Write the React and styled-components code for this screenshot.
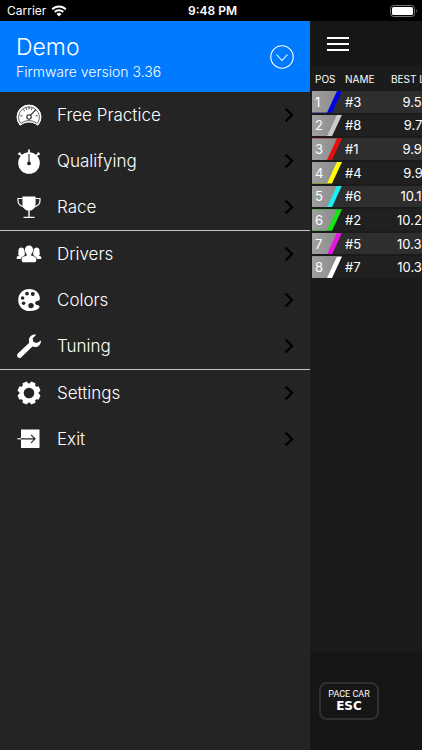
import React from "react";
import styled, { createGlobalStyle } from "styled-components";

const menuGroups = [
  [
    { id: "practice", label: "Free Practice" },
    { id: "qualifying", label: "Qualifying" },
    { id: "race", label: "Race" },
  ],
  [
    { id: "drivers", label: "Drivers" },
    { id: "colors", label: "Colors" },
    { id: "tuning", label: "Tuning" },
  ],
  [
    { id: "settings", label: "Settings" },
    { id: "exit", label: "Exit" },
  ],
];

const drivers = [
  { name: "#3", best: "9.545", color: "#0000e6" },
  { name: "#8", best: "9.743", color: "#cccccc" },
  { name: "#1", best: "9.924", color: "#e60f0f" },
  { name: "#4", best: "9.957", color: "#ffff00" },
  { name: "#6", best: "10.164", color: "#19f0f0" },
  { name: "#2", best: "10.286", color: "#14e614" },
  { name: "#5", best: "10.348", color: "#e614e6" },
  { name: "#7", best: "10.363", color: "#ffffff" },
];

const icons = {
  practice: (
    <>
      <path
        d="M4.2 23.2 A12 12 0 1 1 21.8 23.2 L19.4 21.6 Q13 18.4 6.6 21.6 Z"
        fill="#fff"
        stroke="#fff"
        strokeWidth="1"
        strokeLinejoin="round"
      />
      <path
        d="M4.6 21.4 A10.4 10.4 0 1 1 21.4 21.4 M5 21.2 Q13 15.8 21 21.2"
        fill="none"
        stroke="#242424"
        strokeWidth="0.7"
      />
      <path
        d="M13 5v2.4M7.4 7.6l1.4 1.6M4.4 13.8h2M19.6 13.8h2M9.8 5.8l.8 2M16.2 5.8l-.8 2"
        stroke="#242424"
        strokeWidth="0.9"
      />
      <path d="M13.8 13.8 L20 7.6" stroke="#242424" strokeWidth="1.2" />
      <circle cx="13" cy="15" r="2.2" fill="#fff" stroke="#242424" strokeWidth="1.1" />
    </>
  ),
  qualifying: (
    <>
      <circle cx="13" cy="15" r="10.8" fill="#fff" />
      <path d="M13 1.6v4" stroke="#fff" strokeWidth="1.8" />
      <path
        d="M3.4 5.4l2.2 2.2M22.6 5.4l-2.2 2.2M2.4 6.6l2-2M23.6 6.6l-2-2"
        stroke="#fff"
        strokeWidth="1.8"
      />
      <path d="M13 6v9" stroke="#242424" strokeWidth="1.1" />
      <circle cx="13" cy="15.4" r="1.9" fill="#242424" />
    </>
  ),
  race: (
    <>
      <path d="M6.4 2.4h13.2v7.4q0 5-4.4 6.6h-4.4q-4.4-1.6-4.4-6.6z" fill="#fff" />
      <path
        d="M6.4 4.5H2v2q0 5 6 6.5M19.6 4.5H24v2q0 5-6 6.5"
        fill="none"
        stroke="#fff"
        strokeWidth="1.2"
      />
      <path d="M13 16v7M7.5 23.4h11" stroke="#fff" strokeWidth="1.4" />
    </>
  ),
  drivers: (
    <g fill="#fff">
      <path d="M13 4.4c2.6 0 4 1.8 4 4.4 0 2-.8 3.6-1.8 4.5v1.3c2.9.9 5 1.500 5.200 3.400.1 1.700-.5 3.200-1.200 3.200H6.800c-.7 0-1.300-1.500-1.200-3.200.2-1.900 2.300-2.500 5.200-3.400v-1.300c-1-.9-1.800-2.500-1.800-4.500 0-2.600 1.400-4.400 4-4.400z" />
      <path d="M5.300 6.400c1.600 0 2.800.9 3.100 2.600.3 1.900.2 3.200.8 4.500l-1.600.4 1.100.8c-2 .7-3.500 1.500-3.900 3.200H.9c-.5-1-.3-2.200.6-2.700l2-1-1.600-.6c.7-1.100.4-2.500.6-4.400.2-1.800 1.200-2.800 2.800-2.800z" />
      <path d="M20.700 6.400c-1.600 0-2.800.9-3.100 2.600-.3 1.900-.2 3.200-.8 4.500l1.600.4-1.100.8c2 .7 3.500 1.500 3.900 3.200h3.900c.5-1 .3-2.200-.6-2.700l-2-1 1.600-.6c-.7-1.100-.4-2.500-.6-4.400-.2-1.800-1.200-2.800-2.800-2.800z" />
    </g>
  ),
  colors: (
    <>
      <path
        d="M13.5 2C7 2 2.200 6.700 2.200 12.900S7 24 13.800 24c4.200 0 7.600-.9 9.300-3 .8-1.100.3-2.500-1-2.700-1.900-.3-3-.9-3-2.200 0-1.400 1.400-2 3-2.300 1.600-.4 1.900-1.600 1.700-3.100C23.200 5.600 19.400 2 13.500 2z"
        fill="#fff"
      />
      <g fill="#242424">
        <circle cx="11" cy="6.6" r="1.9" />
        <circle cx="16.8" cy="7" r="2" />
        <circle cx="6.6" cy="11" r="1.8" />
        <circle cx="7.6" cy="16.2" r="1.8" />
        <circle cx="15" cy="18.6" r="2.7" />
      </g>
    </>
  ),
  tuning: (
    <>
      <path d="M3.6 22.4L15.5 11" stroke="#fff" strokeWidth="5" strokeLinecap="round" />
      <path
        d="M20.3 1.600c-4-.9-7.600 2-7.400 6.200.1 3.700 2.700 6.200 6.200 6.200 3.300 0 5.900-2.600 5.900-6.600l-4.200 2.500-3.400-1-.8-3.400z"
        fill="#fff"
      />
    </>
  ),
  settings: (
    <>
      <circle cx="13" cy="13" r="7.4" fill="none" stroke="#fff" strokeWidth="4.2" />
      {[22.5, 67.5, 112.5, 157.5, 202.5, 247.5, 292.5, 337.5].map((angle) => (
        <path
          key={angle}
          d="M9.4 5.6L10.8 1.5h4.4l1.4 4.1z"
          fill="#fff"
          transform={`rotate(${angle} 13 13)`}
        />
      ))}
    </>
  ),
  exit: (
    <>
      <rect x="5" y="3.5" width="18.5" height="18.5" fill="#fff" />
      <path d="M1.5 12.8H5" stroke="#fff" strokeWidth="1.2" />
      <path
        d="M5 12.8h13.5M15 8.8l4 4-4 4"
        fill="none"
        stroke="#242424"
        strokeWidth="1.2"
      />
    </>
  ),
};

const MenuItem = ({ id, label }) => {
  return (
    <li>
      <MenuButton type="button">
        <MenuIcon viewBox="0 0 26 26" aria-hidden="true">
          {icons[id]}
        </MenuIcon>
        <MenuLabel>{label}</MenuLabel>
        <Chevron viewBox="0 0 10 16" aria-hidden="true">
          <path d="M1.5 1.5L8 8l-6.5 6.5" fill="none" stroke="#000" strokeWidth="2.2" />
        </Chevron>
      </MenuButton>
    </li>
  );
};

const StatusBar = () => {
  return (
    <StatusWrapper>
      <StatusSide>
        <span>Carrier</span>
        <svg width="16" height="12" viewBox="0 0 16 12" aria-hidden="true">
          <path
            d="M1.2 4.4a9.6 9.6 0 0 1 13.6 0M3.7 7a6.1 6.1 0 0 1 8.6 0"
            fill="none"
            stroke="#fff"
            strokeWidth="2"
          />
          <path d="M8 11.6L5.5 9a3.6 3.6 0 0 1 5 0z" fill="#fff" />
        </svg>
      </StatusSide>
      <StatusTime>9:48 PM</StatusTime>
      <StatusSide $end>
        <svg width="28" height="12" viewBox="0 0 28 12" aria-hidden="true">
          <rect x="0.5" y="0.5" width="24" height="11" rx="3" fill="none" stroke="#777" />
          <rect x="2" y="2" width="21" height="8" rx="1.5" fill="#fff" />
          <path d="M26 4q1.8 2 0 4z" fill="#777" />
        </svg>
      </StatusSide>
    </StatusWrapper>
  );
};

const App = () => {
  return (
    <>
      <GlobalStyle />
      <Page>
        <StatusBar />
        <Content>
          <Drawer>
            <DrawerHeader>
              <div>
                <DrawerTitle>Demo</DrawerTitle>
                <DrawerText>Firmware version 3.36</DrawerText>
              </div>
              <IconButton type="button" aria-label="Change connection">
                <svg width="24" height="24" viewBox="0 0 24 24">
                  <g fill="none" stroke="#fff" strokeWidth="1.1">
                    <circle cx="12" cy="12" r="11.2" />
                    <path d="M6.5 9.5l5.5 6 5.5-6" />
                  </g>
                </svg>
              </IconButton>
            </DrawerHeader>
            <nav>
              {menuGroups.map((group, index) => (
                <MenuGroup key={index}>
                  {group.map((item) => (
                    <MenuItem key={item.id} {...item} />
                  ))}
                </MenuGroup>
              ))}
            </nav>
          </Drawer>
          <Main>
            <TopBar>
              <IconButton type="button" aria-label="Menu">
                <svg width="22" height="14" viewBox="0 0 22 14">
                  <path d="M0 1h22M0 7h22M0 13h22" stroke="#fff" strokeWidth="2" />
                </svg>
              </IconButton>
            </TopBar>
            <TableArea>
              <Table>
                <thead>
                  <tr>
                    <HeadCell $width="30px">POS</HeadCell>
                    <HeadCell $width="46px">NAME</HeadCell>
                    <HeadCell $width="50px">BEST LAP</HeadCell>
                  </tr>
                </thead>
                <tbody>
                  {drivers.map((driver, index) => (
                    <Row key={driver.name}>
                      <PosCell>
                        <Stripe $color={driver.color}>
                          <Position>{index + 1}</Position>
                        </Stripe>
                      </PosCell>
                      <Cell>{driver.name}</Cell>
                      <Cell $right>{driver.best}</Cell>
                    </Row>
                  ))}
                </tbody>
              </Table>
            </TableArea>
            <BottomBar>
              <PaceCarButton type="button">
                <span>PACE CAR</span>
                <EscText>ESC</EscText>
              </PaceCarButton>
            </BottomBar>
          </Main>
        </Content>
      </Page>
    </>
  );
};

export default App;

const GlobalStyle = createGlobalStyle`
  * {
    box-sizing: border-box;
  }
  body {
    margin: 0;
    background-color: #1b1b1b;
    color: #ffffff;
    font-family: Inter, "Liberation Sans", sans-serif;
  }
  button {
    padding: 0;
    border: none;
    background: none;
    color: inherit;
    font-family: inherit;
    cursor: pointer;
  }
  svg {
    display: block;
    flex-shrink: 0;
  }
`;

const Page = styled.div`
  display: flex;
  flex-direction: column;
  min-height: 100vh;
`;

const StatusWrapper = styled.header`
  display: flex;
  align-items: center;
  height: 21px;
  padding: 0 4px 0 7px;
  background-color: #000000;
  font-size: 12px;
  line-height: 20px;
`;

const StatusSide = styled.div`
  display: flex;
  flex: 1;
  align-items: center;
  justify-content: ${({ $end }) => ($end ? "flex-end" : "flex-start")};
  gap: 5px;
`;

const StatusTime = styled.div`
  font-weight: 600;
`;

const Content = styled.div`
  display: flex;
  flex: 1;
`;

const Drawer = styled.aside`
  flex: 0 0 310px;
  background-color: #242424;
`;

const DrawerHeader = styled.div`
  display: flex;
  align-items: center;
  justify-content: space-between;
  height: 71px;
  padding: 0 16px;
  background-color: #007aff;
`;

const DrawerTitle = styled.h1`
  margin: 0;
  font-weight: 300;
  font-size: 23px;
  line-height: 30px;
`;

const DrawerText = styled.p`
  margin: 0;
  font-weight: 300;
  font-size: 14px;
  line-height: 20px;
`;

const IconButton = styled.button`
  display: flex;
`;

const MenuGroup = styled.ul`
  margin: 0;
  padding: 0;
  list-style: none;
  & + & {
    border-top: 1px solid #c8c8c8;
  }
`;

const MenuButton = styled.button`
  display: flex;
  align-items: center;
  width: 100%;
  height: 46px;
  padding: 0 16px;
  text-align: left;
`;

const MenuIcon = styled.svg`
  width: 26px;
  height: 26px;
`;

const MenuLabel = styled.span`
  flex: 1;
  padding-left: 15px;
  font-weight: 300;
  font-size: 17px;
  line-height: 24px;
`;

const Chevron = styled.svg`
  width: 10px;
  height: 16px;
`;

const Main = styled.main`
  display: flex;
  flex: 1;
  flex-direction: column;
  min-width: 0;
  overflow: hidden;
`;

const TopBar = styled.div`
  display: flex;
  align-items: center;
  height: 45px;
  padding: 0 17px;
  background-color: #161616;
`;

const TableArea = styled.div`
  flex: 1;
  padding-left: 2px;
`;

const Table = styled.table`
  table-layout: fixed;
  width: 126px;
  height: 214px;
  border-spacing: 0 2px;
`;

const HeadCell = styled.th`
  width: ${({ $width }) => $width};
  height: 21px;
  padding: 0 0 0 3px;
  font-weight: 400;
  font-size: 10px;
  line-height: 20px;
  text-align: left;
  white-space: nowrap;
`;

const Row = styled.tr`
  &:nth-child(odd) {
    background-color: #2e2e2e;
  }
  &:nth-child(even) {
    background-color: #202020;
  }
`;

const Cell = styled.td`
  height: 21px;
  padding: 0 0 0 3px;
  font-size: 13px;
  line-height: 20px;
  text-align: ${({ $right }) => ($right ? "right" : "left")};
`;

const PosCell = styled.td`
  height: 21px;
  padding: 0;
`;

const Stripe = styled.div`
  height: 100%;
  background-color: ${({ $color }) => $color};
  clip-path: polygon(0 0, 100% 0, 20px 100%, 0 100%);
`;

const Position = styled.div`
  display: flex;
  align-items: center;
  width: 25px;
  height: 100%;
  padding-left: 3px;
  background: linear-gradient(90deg, #a0a0a0, #8c8c8c);
  clip-path: polygon(0 0, 100% 0, 15px 100%, 0 100%);
  font-size: 13px;
  line-height: 20px;
`;

const BottomBar = styled.footer`
  display: flex;
  align-items: center;
  height: 98px;
  padding: 0 9px;
  background-color: #161616;
`;

const PaceCarButton = styled.button`
  display: flex;
  flex-direction: column;
  align-items: center;
  justify-content: center;
  width: 60px;
  height: 38px;
  border: 2px solid #303030;
  border-radius: 8px;
  font-family: Roboto, sans-serif;
  font-size: 9px;
  line-height: 10px;
  white-space: nowrap;
`;

const EscText = styled.span`
  font-family: "DejaVu Sans", sans-serif;
  font-weight: 700;
  font-size: 12px;
  line-height: 14px;
`;
